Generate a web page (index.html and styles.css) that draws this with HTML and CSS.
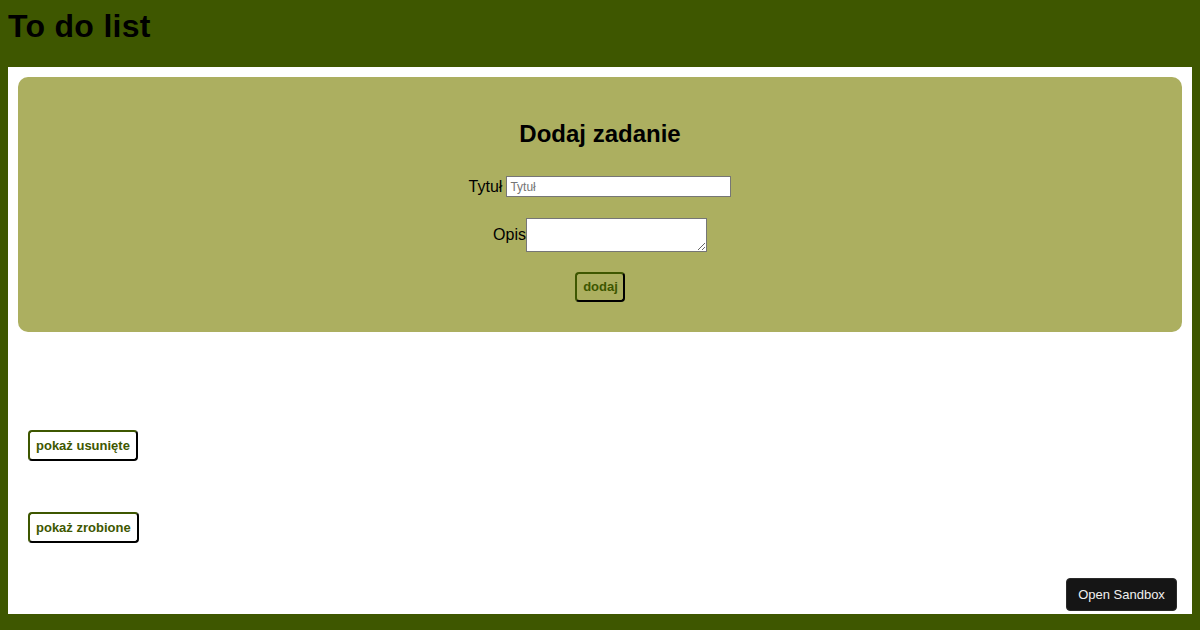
FILE: index.html
```html
<!DOCTYPE html>
<html lang="pl">
<head>
    <meta charset="UTF-8">
    <meta name="viewport" content="width=device-width, initial-scale=1.0">
    <title>To do list</title>
    <link rel="stylesheet" href="styles.css">
</head>
<body>
    <h1>To do list</h1>
    <main class="content">
        <form class="add-form" onsubmit="return false;">
            <h2>Dodaj zadanie</h2>
            <div class="form-row">
                <label for="title">Tytuł</label>
                <input type="text" id="title" placeholder="Tytuł">
            </div>
            <div class="form-row">
                <label class="tight" for="desc">Opis</label>
                <textarea id="desc"></textarea>
            </div>
            <div class="form-row">
                <button class="btn" type="submit">dodaj</button>
            </div>
        </form>

        <div class="lists">
            <button class="btn btn-light">pokaż usunięte</button>
            <button class="btn btn-light">pokaż zrobione</button>
        </div>
    </main>

    <button class="sandbox">Open Sandbox</button>
</body>
</html>
```

FILE: styles.css
```css
body {
    font-family: 'Liberation Sans', Arial, sans-serif;
    background-color: #3e5700;
    margin: 8px;
}
h1 {
    font-size: 32px;
    letter-spacing: 0.3px;
    margin: 0 0 22px 0;
    color: #000;
}
.content {
    background-color: white;
    height: 527px;
    padding: 10px;
}
.add-form {
    background-color: #acaf60;
    border-radius: 10px;
    height: 255px;
    box-sizing: border-box;
    padding-top: 43px;
    display: flex;
    flex-direction: column;
    align-items: center;
}
.add-form h2 {
    font-size: 24px;
    margin: 0 0 28px 0;
}
.form-row {
    display: flex;
    align-items: center;
    margin-bottom: 21px;
    font-size: 16px;
}
.form-row:last-child {
    margin-bottom: 0;
    margin-top: -1px;
}
.form-row label {
    margin-right: 4px;
}
.form-row label.tight {
    margin-right: 0;
}
.form-row input {
    width: 225px;
    height: 21px;
    box-sizing: border-box;
    border: 1px solid #767676;
    padding: 1px 3px;
    font-family: 'Liberation Sans', Arial, sans-serif;
    font-size: 12px;
    margin: 0;
}
.form-row input::placeholder {
    color: #757575;
}
.form-row textarea {
    width: 181px;
    height: 34px;
    box-sizing: border-box;
    border: 1px solid #767676;
    margin: 0;
}
.btn {
    font-family: 'Liberation Sans', Arial, sans-serif;
    font-weight: bold;
    font-size: 13px;
    line-height: 15px;
    color: #3e5700;
    background-color: transparent;
    border: 2px solid;
    border-color: #3e5700 #000 #000 #3e5700;
    border-radius: 4px;
    padding: 5px 5px 6px 6px;
    cursor: pointer;
}
.lists {
    display: flex;
    flex-direction: column;
    align-items: flex-start;
    gap: 51px;
    padding: 98px 10px 0 10px;
}
.btn-light {
    background-color: white;
    padding: 6px 6px 6px 6px;
}
.sandbox {
    position: fixed;
    right: 23px;
    bottom: 19px;
    width: 111px;
    height: 33px;
    background-color: #151515;
    color: #f0f0f0;
    border: 1px solid #2a2a2a;
    border-radius: 4px;
    font-family: 'Liberation Sans', Arial, sans-serif;
    font-size: 13px;
    cursor: pointer;
}
```
